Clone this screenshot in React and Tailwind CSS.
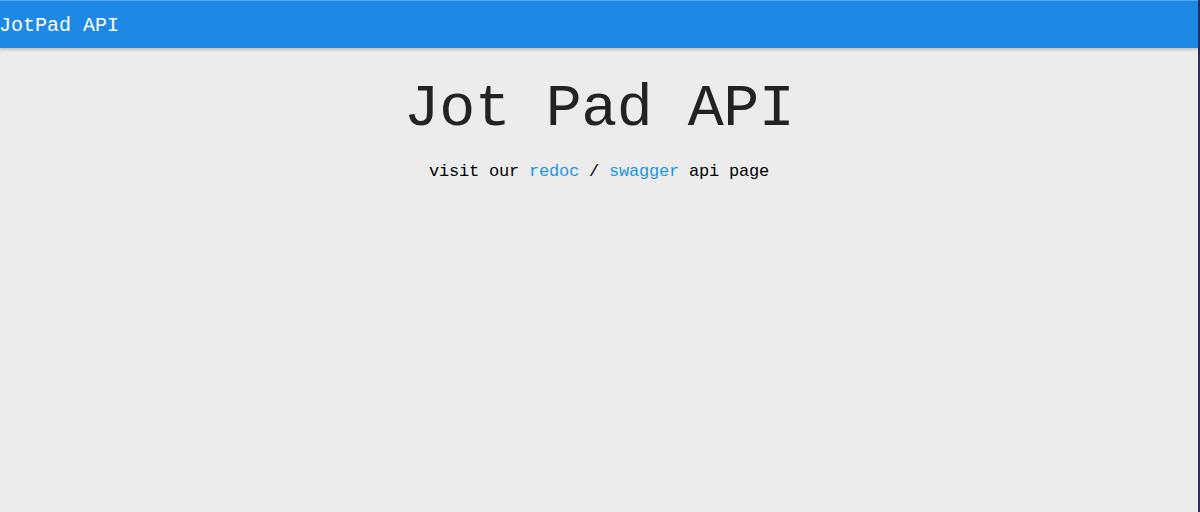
import React from 'react';

const mono = { fontFamily: '"Liberation Mono", "DejaVu Sans Mono", monospace' };

const App = () => {
  return (
    <div className="min-h-[512px] bg-[#ececec] flex flex-col border-r-2 border-[#2e2a62]" style={mono}>
      {/* Header bar */}
      <div className="h-[48px] bg-[#1e88e5] border-t border-[#5aa7ec] shadow-[0_2px_3px_rgba(0,0,0,0.18)] flex items-center pt-[3px]">
        <span className="text-white text-[20px] leading-none -ml-[1px]">JotPad API</span>
      </div>

      {/* Main */}
      <div className="flex flex-col items-center pt-[26px]">
        <h1 className="text-[60px] leading-[70px] text-[#222] tracking-[-0.5px]">Jot Pad API</h1>
        <p className="mt-[15px] text-[17px] text-black tracking-[-0.2px]">
          visit our <a href="#" className="text-[#1a96e6]">redoc</a> / <a href="#" className="text-[#1a96e6]">swagger</a> api page
        </p>
      </div>
    </div>
  );
};

export default App;
